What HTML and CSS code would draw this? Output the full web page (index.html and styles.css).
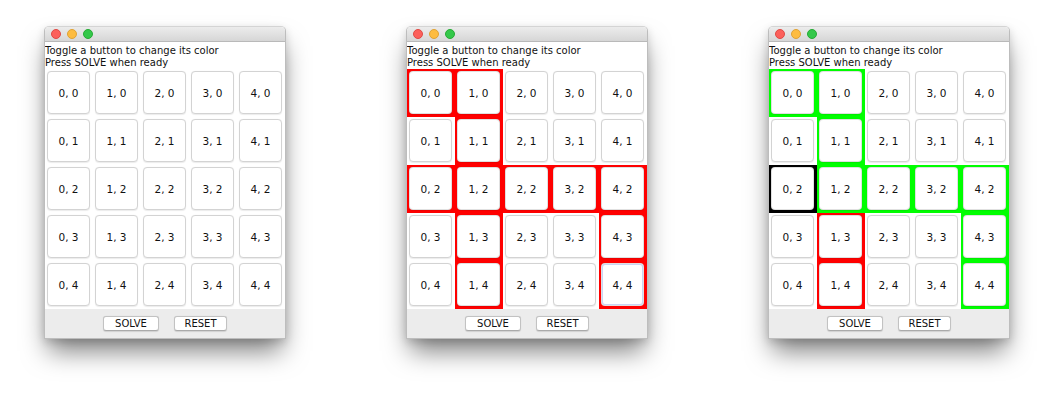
FILE: index.html
```html
<!DOCTYPE html>
<html>
<head>
<meta charset="utf-8">
<link rel="stylesheet" href="styles.css">
</head>
<body>
<div class="desk">
  <div class="win">
    <div class="titlebar"><span class="light l-red"></span><span class="light l-yellow"></span><span class="light l-green"></span></div>
    <div class="labels"><div>Toggle a button to change its color</div><div>Press SOLVE when ready</div></div>
    <div class="grid">
      <div class="cell"><div class="btn">0, 0</div></div><div class="cell"><div class="btn">1, 0</div></div><div class="cell"><div class="btn">2, 0</div></div><div class="cell"><div class="btn">3, 0</div></div><div class="cell"><div class="btn">4, 0</div></div>
      <div class="cell"><div class="btn">0, 1</div></div><div class="cell"><div class="btn">1, 1</div></div><div class="cell"><div class="btn">2, 1</div></div><div class="cell"><div class="btn">3, 1</div></div><div class="cell"><div class="btn">4, 1</div></div>
      <div class="cell"><div class="btn">0, 2</div></div><div class="cell"><div class="btn">1, 2</div></div><div class="cell"><div class="btn">2, 2</div></div><div class="cell"><div class="btn">3, 2</div></div><div class="cell"><div class="btn">4, 2</div></div>
      <div class="cell"><div class="btn">0, 3</div></div><div class="cell"><div class="btn">1, 3</div></div><div class="cell"><div class="btn">2, 3</div></div><div class="cell"><div class="btn">3, 3</div></div><div class="cell"><div class="btn">4, 3</div></div>
      <div class="cell"><div class="btn">0, 4</div></div><div class="cell"><div class="btn">1, 4</div></div><div class="cell"><div class="btn">2, 4</div></div><div class="cell"><div class="btn">3, 4</div></div><div class="cell"><div class="btn">4, 4</div></div>
    </div>
    <div class="bar"><div class="pbtn">SOLVE</div><div class="pbtn">RESET</div></div>
  </div>

  <div class="win">
    <div class="titlebar"><span class="light l-red"></span><span class="light l-yellow"></span><span class="light l-green"></span></div>
    <div class="labels"><div>Toggle a button to change its color</div><div>Press SOLVE when ready</div></div>
    <div class="grid">
      <div class="cell red"><div class="btn">0, 0</div></div><div class="cell red"><div class="btn">1, 0</div></div><div class="cell"><div class="btn">2, 0</div></div><div class="cell"><div class="btn">3, 0</div></div><div class="cell"><div class="btn">4, 0</div></div>
      <div class="cell"><div class="btn">0, 1</div></div><div class="cell red"><div class="btn">1, 1</div></div><div class="cell"><div class="btn">2, 1</div></div><div class="cell"><div class="btn">3, 1</div></div><div class="cell"><div class="btn">4, 1</div></div>
      <div class="cell red"><div class="btn">0, 2</div></div><div class="cell red"><div class="btn">1, 2</div></div><div class="cell red"><div class="btn">2, 2</div></div><div class="cell red"><div class="btn">3, 2</div></div><div class="cell red"><div class="btn">4, 2</div></div>
      <div class="cell"><div class="btn">0, 3</div></div><div class="cell red"><div class="btn">1, 3</div></div><div class="cell"><div class="btn">2, 3</div></div><div class="cell"><div class="btn">3, 3</div></div><div class="cell red"><div class="btn">4, 3</div></div>
      <div class="cell"><div class="btn">0, 4</div></div><div class="cell red"><div class="btn">1, 4</div></div><div class="cell"><div class="btn">2, 4</div></div><div class="cell"><div class="btn">3, 4</div></div><div class="cell red"><div class="btn focus">4, 4</div></div>
    </div>
    <div class="bar"><div class="pbtn">SOLVE</div><div class="pbtn">RESET</div></div>
  </div>

  <div class="win">
    <div class="titlebar"><span class="light l-red"></span><span class="light l-yellow"></span><span class="light l-green"></span></div>
    <div class="labels"><div>Toggle a button to change its color</div><div>Press SOLVE when ready</div></div>
    <div class="grid">
      <div class="cell green"><div class="btn">0, 0</div></div><div class="cell green"><div class="btn">1, 0</div></div><div class="cell"><div class="btn">2, 0</div></div><div class="cell"><div class="btn">3, 0</div></div><div class="cell"><div class="btn">4, 0</div></div>
      <div class="cell"><div class="btn">0, 1</div></div><div class="cell green"><div class="btn">1, 1</div></div><div class="cell"><div class="btn">2, 1</div></div><div class="cell"><div class="btn">3, 1</div></div><div class="cell"><div class="btn">4, 1</div></div>
      <div class="cell black"><div class="btn">0, 2</div></div><div class="cell green"><div class="btn">1, 2</div></div><div class="cell green"><div class="btn">2, 2</div></div><div class="cell green"><div class="btn">3, 2</div></div><div class="cell green"><div class="btn">4, 2</div></div>
      <div class="cell"><div class="btn">0, 3</div></div><div class="cell red"><div class="btn">1, 3</div></div><div class="cell"><div class="btn">2, 3</div></div><div class="cell"><div class="btn">3, 3</div></div><div class="cell green"><div class="btn">4, 3</div></div>
      <div class="cell"><div class="btn">0, 4</div></div><div class="cell red"><div class="btn">1, 4</div></div><div class="cell"><div class="btn">2, 4</div></div><div class="cell"><div class="btn">3, 4</div></div><div class="cell green"><div class="btn">4, 4</div></div>
    </div>
    <div class="bar"><div class="pbtn">SOLVE</div><div class="pbtn">RESET</div></div>
  </div>
</div>
</body>
</html>
```

FILE: styles.css
```css
html, body {
  margin: 0;
  padding: 0;
  background: #ffffff;
}

body {
  width: 1053px;
  height: 404px;
  overflow: hidden;
  font-family: "DejaVu Sans", "Liberation Sans", sans-serif;
  font-size: 10px;
  color: #1a1a1a;
}

.desk {
  display: flex;
  align-items: flex-start;
  gap: 120px;
  padding: 26px 0 0 44px;
}

.win {
  box-sizing: border-box;
  width: 242px;
  flex: none;
  border: 1px solid #bdbdbd;
  border-top-color: #d4d4d4;
  border-radius: 5px 5px 0 0;
  background: #ffffff;
  box-shadow: 0 16px 26px -4px rgba(0, 0, 0, 0.5), 0 3px 8px rgba(0, 0, 0, 0.14);
  overflow: hidden;
}

.titlebar {
  box-sizing: border-box;
  height: 15px;
  display: flex;
  align-items: center;
  gap: 6px;
  padding-left: 6px;
  background: linear-gradient(#ececec, #d6d6d6);
  border-bottom: 1px solid #b9b9b9;
}

.light {
  width: 10px;
  height: 10px;
  border-radius: 50%;
  box-sizing: border-box;
}

.l-red { background: #fc605b; border: 0.5px solid #de4a45; }
.l-yellow { background: #fdbc40; border: 0.5px solid #dea236; }
.l-green { background: #34c84a; border: 0.5px solid #27aa35; }

.labels {
  height: 27px;
  box-sizing: border-box;
  padding: 3px 0 0 0;
  line-height: 12px;
  white-space: nowrap;
  color: #111;
}

.grid {
  display: grid;
  grid-template-columns: repeat(5, 48px);
  grid-template-rows: repeat(5, 48px);
}

.cell {
  box-sizing: border-box;
  padding: 2px 3px 3px 2px;
  display: flex;
}

.cell.red { background: #ff0000; }
.cell.green { background: #00ff00; }
.cell.black { background: #000000; }

.btn {
  flex: 1;
  box-sizing: border-box;
  border: 1px solid #d3d3d3;
  border-radius: 4px;
  background: #ffffff;
  display: flex;
  align-items: center;
  justify-content: center;
  font-size: 10.5px;
  color: #111;
  box-shadow: 0 0.5px 1px rgba(0, 0, 0, 0.08);
}

.cell.red .btn,
.cell.green .btn,
.cell.black .btn {
  border-color: rgba(0, 0, 0, 0.12);
}

.btn.focus {
  border: 1px solid #8196dc;
  box-shadow: inset 0 0 0 1px rgba(150, 170, 235, 0.5);
}

.bar {
  height: 29px;
  background: #ececec;
  display: flex;
  justify-content: center;
  align-items: flex-start;
  gap: 15px;
  padding-top: 7px;
  box-sizing: border-box;
}

.pbtn {
  box-sizing: border-box;
  height: 15px;
  background: #ffffff;
  border: 1px solid #c2c2c2;
  border-bottom-color: #aaaaaa;
  border-radius: 3px;
  display: flex;
  align-items: center;
  justify-content: center;
  font-size: 10px;
  color: #111;
  box-shadow: 0 0.5px 1px rgba(0, 0, 0, 0.12);
}

.pbtn:first-child { width: 56px; }
.pbtn:last-child { width: 53px; }
```
